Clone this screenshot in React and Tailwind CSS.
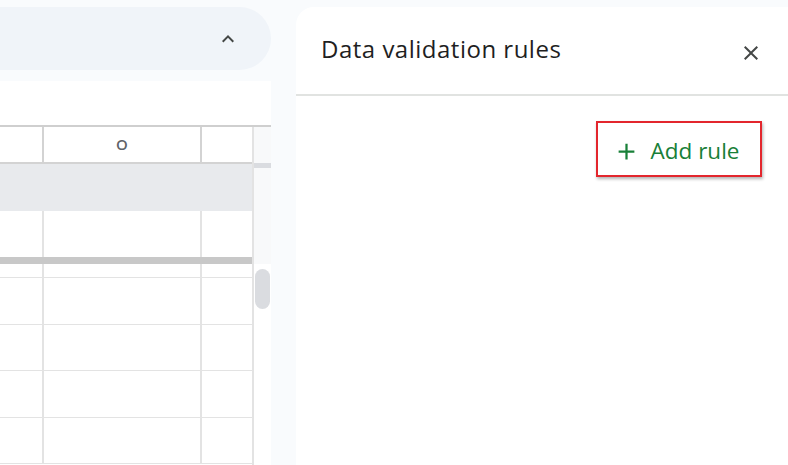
const font = { fontFamily: 'Roboto, "Noto Sans", sans-serif' };

const Row = ({ h, line = true }) => (
  <div className={`flex ${h} ${line ? 'border-b border-[#e3e3e3]' : ''}`}>
    <div className="w-[44px] border-r-2 border-[#e3e3e3]" />
    <div className="w-[158px] border-r-2 border-[#e3e3e3]" />
    <div className="flex-1" />
  </div>
);

const App = () => {
  return (
    <div className="h-screen w-full overflow-hidden bg-[#f9fbfd] flex" style={font}>
      {/* Left: toolbar pill + sheet */}
      <div className="w-[271px] flex flex-col pt-[7px]">
        <div className="h-[63px] bg-[#f0f4f9] rounded-r-[32px] flex items-center justify-end pr-[31px]">
          <svg width="24" height="24" viewBox="0 0 24 24" fill="#444746">
            <path d="M7.41 15.41L12 10.83l4.59 4.58L18 14l-6-6-6 6z" />
          </svg>
        </div>
        <div className="mt-[11px] flex-1 bg-white flex flex-col">
          <div className="h-[44px]" />
          <div className="flex flex-1 border-t-2 border-[#cfcfcf]">
            <div className="w-[252px] flex flex-col">
              {/* column header */}
              <div className="flex h-[37px] border-b-2 border-[#d3d3d3]">
                <div className="w-[44px] border-r-2 border-[#d3d3d3]" />
                <div
                  className="w-[158px] border-r-2 border-[#d3d3d3] flex items-center justify-center text-[15px] font-semibold text-[#5f6368]"
                  style={{ fontFamily: '"Open Sans", sans-serif' }}
                >
                  O
                </div>
                <div className="flex-1" />
              </div>
              <div className="h-[47px] bg-[#e8eaed]" />
              <Row h="h-[46px]" line={false} />
              <div className="h-[7px] bg-[#c8c8c8]" />
              <Row h="h-[14px]" />
              <Row h="h-[47px]" />
              <Row h="h-[46px]" />
              <Row h="h-[47px]" />
              <Row h="h-[46px]" />
            </div>
            <div className="flex-1 flex flex-col border-l-2 border-[#e3e3e3]">
              <div className="h-[36px] bg-[#f8f9fa]" />
              <div className="h-[5px] bg-[#dadce0]" />
              <div className="h-[96px] bg-[#f8f9fa]" />
              <div className="flex-1 bg-white pt-[5px] pl-px">
                <div className="w-[15px] h-[40px] rounded-full bg-[#dadce0]" />
              </div>
            </div>
          </div>
        </div>
      </div>

      {/* Right: side panel */}
      <div
        className="ml-[25px] mt-[7px] flex-1 bg-white rounded-tl-[18px] flex flex-col"
        style={{ fontFamily: '"Open Sans", Roboto, sans-serif' }}
      >
        <div className="h-[87px] flex items-center justify-between pl-[25px] pr-[25px]">
          <span className="text-[24px] text-[#1f1f1f] tracking-[0.5px] mb-[3px]">Data validation rules</span>
          <svg width="24" height="24" viewBox="0 0 24 24" fill="#444746" className="mt-[5px]">
            <path d="M19 6.41L17.59 5 12 10.59 6.41 5 5 6.41 10.59 12 5 17.59 6.41 19 12 13.41 17.59 19 19 17.59 13.41 12z" />
          </svg>
        </div>
        <div className="h-[2px] bg-[#e1e3e1]" />
        <div className="flex justify-end pr-[26px] pt-[25px]">
          <button className="w-[166px] h-[56px] border-2 border-[#e3262d] shadow-[1px_2px_3px_rgba(0,0,0,0.3)] flex items-center justify-center gap-[11px] pt-[3px] pr-[6px] text-[#188038]">
            <svg width="27" height="27" viewBox="0 0 24 24" fill="#188038" className="mt-[1px]">
              <path d="M19 13h-6v6h-2v-6H5v-2h6V5h2v6h6v2z" />
            </svg>
            <span className="text-[22.5px] font-medium">Add rule</span>
          </button>
        </div>
      </div>
    </div>
  );
};

export default App;
